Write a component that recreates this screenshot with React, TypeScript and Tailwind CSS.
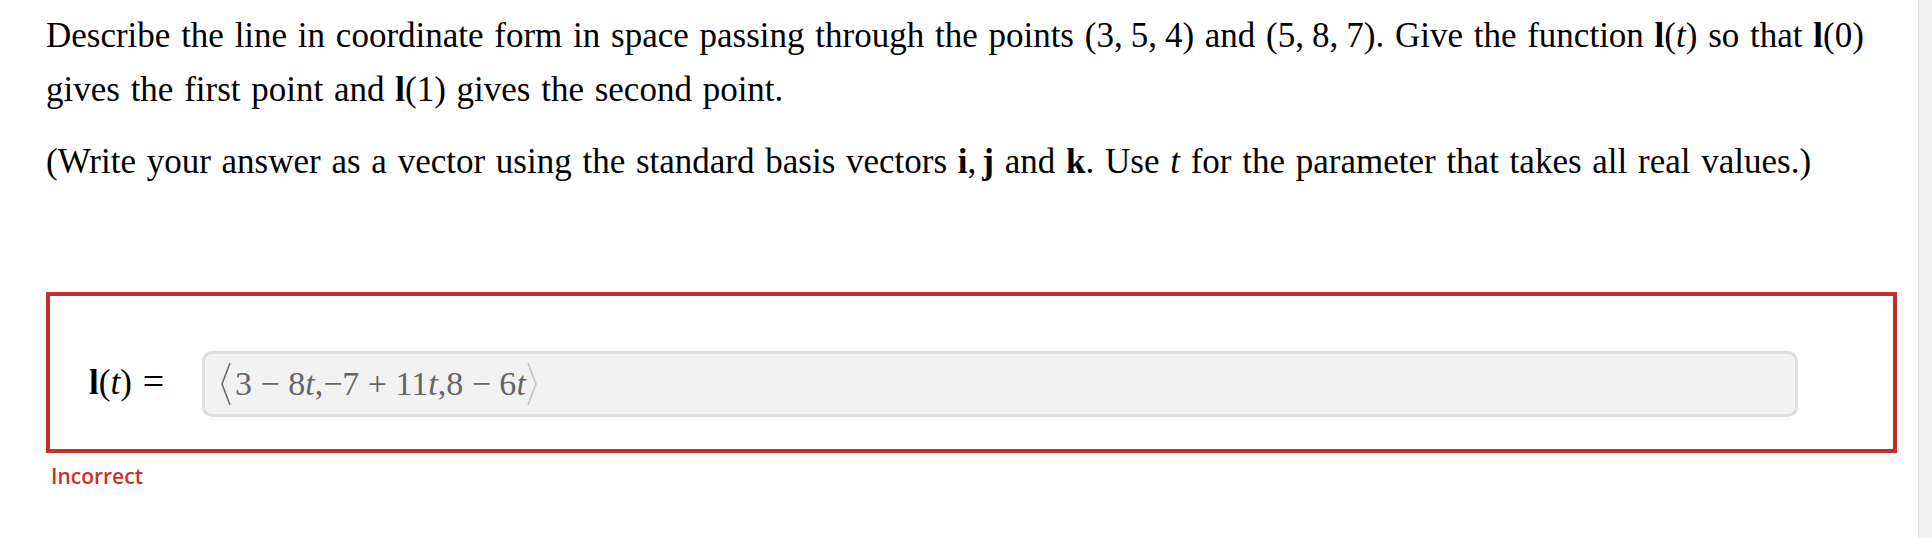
const serif = { fontFamily: '"Liberation Serif", "Times New Roman", serif', wordSpacing: "2px" };

function AngleLeft({ color }: { color: string }) {
  return (
    <svg width="12" height="44" viewBox="0 0 12 44" className="shrink-0">
      <polyline points="10,1 2,22 10,43" fill="none" stroke={color} strokeWidth="1.6" />
    </svg>
  );
}

function AngleRight({ color }: { color: string }) {
  return (
    <svg width="12" height="44" viewBox="0 0 12 44" className="shrink-0">
      <polyline points="2,1 10,22 2,43" fill="none" stroke={color} strokeWidth="1.6" />
    </svg>
  );
}

export default function App() {
  return (
    <div className="flex min-h-[538px] bg-white text-black">
      <div className="flex-1 pl-[46px] pr-[21px] pt-[9px]" style={serif}>
        <p className="text-[35px] leading-[54px]">
          Describe the line in coordinate form in space passing through the points (3,
          <span className="ml-[8px]">5,</span>
          <span className="ml-[8px]">4)</span> and (5,<span className="ml-[8px]">8,</span>
          <span className="ml-[8px]">7)</span>. Give the function <b>l</b>(<i>t</i>) so that <b>l</b>(0)
          <br />
          gives the first point and <b>l</b>(1) gives the second point.
        </p>
        <p className="mt-[18px] text-[35px] leading-[54px]">
          (Write your answer as a vector using the standard basis vectors <b>i</b>,<b className="ml-[6px]">j</b> and{" "}
          <b>k</b>. Use <i>t</i> for the parameter that takes all real values.)
        </p>

        <div className="mt-[103px] flex h-[161px] items-start border-4 border-[#c0302f] pl-[39px] pr-[95px] pt-[55px]">
          <div className="flex h-[66px] w-[113px] shrink-0 items-center text-[35px] leading-[40px]">
            <span className="-mt-[4px] flex items-baseline">
              <b>l</b>(<i>t</i>)<span className="ml-[11px] text-[38px]">=</span>
            </span>
          </div>
          <div className="flex h-[66px] flex-1 items-center rounded-[10px] border-[3px] border-[#dedede] bg-[#f2f2f2] pl-[15px] text-[34px] leading-[40px] text-[#666666]">
            <AngleLeft color="#6b6b6b" />
            <span className="ml-[3px] whitespace-pre" style={{ wordSpacing: "0px" }}>
              3 − 8<i>t</i>,−7 + 11<i>t</i>,8 − 6<i>t</i>
            </span>
            <AngleRight color="#c4c4c4" />
          </div>
        </div>

        <p
          className="mt-[8px] pl-[5px] text-[21px] font-semibold leading-[30px] text-[#c9302c]"
          style={{ fontFamily: '"Open Sans", "Liberation Sans", sans-serif', wordSpacing: "0px" }}
        >
          Incorrect
        </p>
      </div>
      <div className="w-[14px] shrink-0 border-l border-[#e2e2e2] bg-[#f1f1f1]" />
    </div>
  );
}
